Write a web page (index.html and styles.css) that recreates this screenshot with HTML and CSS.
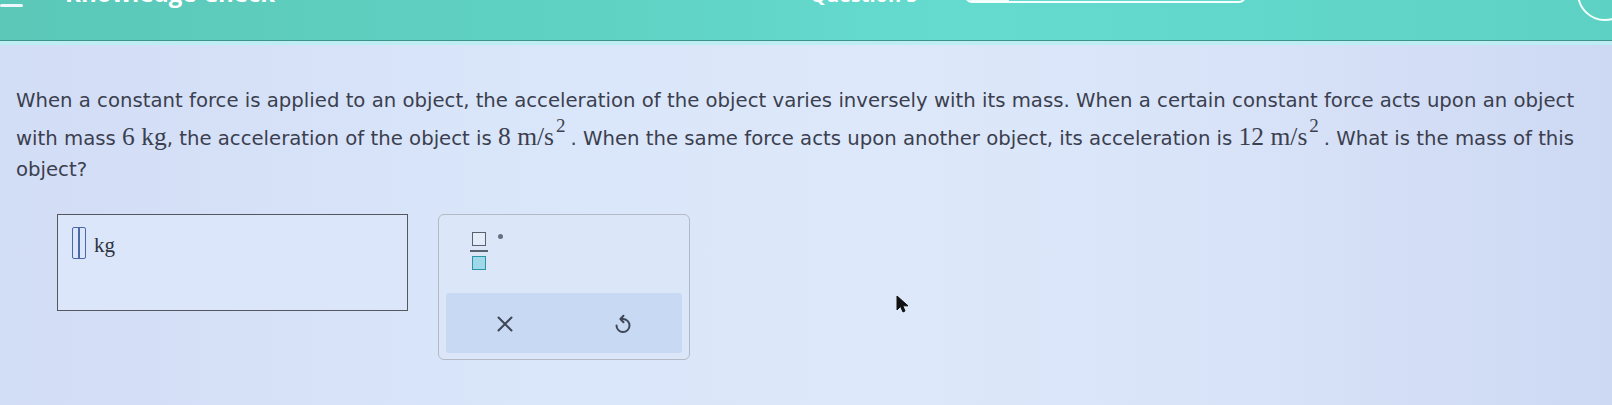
FILE: index.html
```html
<!DOCTYPE html>
<html lang="en">
<head>
<meta charset="utf-8">
<title>Knowledge Check</title>
<link rel="stylesheet" href="styles.css">
</head>
<body>
<header class="topbar">
  <div class="topbar-inner">
    <div class="brand">
      <span class="menu-icon"><span></span><span></span><span></span></span>
      <span class="title">Knowledge Check</span>
    </div>
    <span class="question-label">Question 5</span>
    <span class="progress"><span class="progress-fill"></span></span>
    <span class="avatar"></span>
  </div>
</header>
<main class="content">
  <p class="question">When a constant force is applied to an object, the acceleration of the object varies inversely with its mass. When a certain constant force acts upon an object with mass <span class="math">6 kg</span>, the acceleration of the object is <span class="math">8 m/s<sup>2</sup></span>. When the same force acts upon another object, its acceleration is <span class="math">12 m/s<sup>2</sup></span>. What is the mass of this object?</p>
  <div class="answer-row">
    <div class="answer-box">
      <span class="slot"><span class="slot-cursor"></span></span>
      <span class="unit">kg</span>
    </div>
    <div class="keypad">
      <div class="keypad-top">
        <button class="key key-fraction" type="button" aria-label="fraction">
          <span class="frac-num"></span>
          <span class="frac-bar"></span>
          <span class="frac-den"></span>
        </button>
        <span class="key-dot"></span>
      </div>
      <div class="keypad-actions">
        <button class="action" type="button" aria-label="clear">
          <svg width="18" height="18" viewBox="0 0 18 18"><path d="M2.5 2.5 L15.5 15.5 M15.5 2.5 L2.5 15.5" stroke="#3f4656" stroke-width="2" fill="none" stroke-linecap="round"/></svg>
        </button>
        <button class="action" type="button" aria-label="undo">
          <svg width="20" height="22" viewBox="0 0 20 22"><path d="M8 6 H10 A6.5 6.5 0 1 1 3.5 12.5" stroke="#3f4656" stroke-width="2" fill="none" stroke-linecap="round"/><path d="M10.5 2.8 L7.4 6 L10.5 9.2" stroke="#3f4656" stroke-width="2" fill="none" stroke-linecap="round" stroke-linejoin="round"/></svg>
        </button>
      </div>
    </div>
  </div>
</main>
<svg class="pointer" width="16" height="20" viewBox="0 0 16 20"><path d="M1 1 L1 15 L4.5 11.5 L7 17 L9 16 L6.8 10.8 L12 10.8 Z" fill="#111" stroke="#111" stroke-width="1" stroke-linejoin="round"/></svg>
</body>
</html>
```
FILE: styles.css
```css
* { box-sizing: border-box; }
html, body { margin: 0; padding: 0; }
body {
  width: 1612px;
  height: 405px;
  overflow: hidden;
  position: relative;
  font-family: "DejaVu Sans", Verdana, sans-serif;
  background: linear-gradient(90deg, #d2ddf6 0%, #d9e5f9 30%, #dde9fa 55%, #d7e2f8 80%, #cdd8f3 100%);
  color: #3b3f4f;
}

.topbar {
  height: 41px;
  background: linear-gradient(90deg, #5bc8b8 0%, #60d3c5 40%, #65dbd0 60%, #5dd2c4 100%);
  border-bottom: 1px solid #3e938a;
  box-shadow: 0 4px 0 #bdeef3;
  overflow: hidden;
  position: relative;
  z-index: 1;
}
.topbar-inner {
  display: flex;
  align-items: flex-end;
  height: 24px;
  margin-top: -19px;
  color: #fff;
  white-space: nowrap;
}
.brand {
  width: 810px;
  flex: none;
  display: flex;
  align-items: flex-end;
}
.menu-icon {
  display: flex;
  flex-direction: column;
  gap: 5px;
  width: 23px;
  margin-bottom: -2px;
  flex: none;
}
.menu-icon span { height: 3px; background: #eef6ff; border-radius: 2px; }
.title {
  margin-left: 42px;
  font-family: "Open Sans", sans-serif;
  font-weight: 700;
  font-size: 24px;
  line-height: 24px;
}
.question-label {
  width: 155px;
  flex: none;
  font-family: "Open Sans", sans-serif;
  font-weight: 700;
  font-size: 20px;
  line-height: 24px;
  margin-bottom: -2px;
}
.progress {
  width: 281px;
  flex: none;
  height: 14px;
  border: 2px solid #f4ffff;
  border-radius: 8px;
  margin-bottom: 2px;
  overflow: hidden;
  display: flex;
}
.progress-fill { width: 42px; background: #f4ffff; }
.avatar {
  margin-left: 331px;
  width: 56px;
  height: 56px;
  border: 2px solid #f4ffff;
  border-radius: 50%;
  margin-bottom: -16px;
  flex: none;
}

.content {
  padding: 44px 0 0 16px;
}
.question {
  margin: 0;
  width: 1580px;
  font-size: 19.7px;
  line-height: 31px;
}
.math {
  font-family: "Liberation Serif", "Times New Roman", serif;
  font-size: 25.5px;
}
.math sup {
  font-size: 19px;
  vertical-align: 13px;
  line-height: 1;
  margin-left: 2px;
  margin-right: 5px;
}

.answer-row {
  display: flex;
  align-items: flex-start;
  gap: 30px;
  margin-top: 29px;
  padding-left: 41px;
}
.answer-box {
  width: 351px;
  height: 97px;
  border: 1.5px solid #53585f;
  background: #dbe6fa;
  display: flex;
  align-items: flex-start;
  gap: 8px;
  padding: 12px 0 0 14px;
}
.slot {
  width: 14px;
  height: 32px;
  border: 1.5px solid #4d68a8;
  border-radius: 2px;
  display: flex;
  justify-content: center;
  flex: none;
}
.slot-cursor { width: 1.5px; background: #4d68a8; }
.unit {
  font-family: "Liberation Serif", "Times New Roman", serif;
  font-size: 21px;
  color: #2f3340;
  margin-top: 6px;
}

.keypad {
  width: 252px;
  height: 146px;
  border: 1px solid #b3bac6;
  border-radius: 6px;
  background: #dbe6f9;
  padding: 0 7px 6px 7px;
  display: flex;
  flex-direction: column;
  justify-content: space-between;
}
.keypad-top {
  display: flex;
  align-items: flex-start;
  padding: 17px 0 0 24px;
  gap: 10px;
}
.key {
  border: none;
  background: none;
  padding: 0;
  cursor: pointer;
}
.key-fraction {
  display: flex;
  flex-direction: column;
  align-items: center;
  gap: 4px;
  width: 18px;
}
.frac-num {
  width: 14px; height: 14px;
  border: 1.5px solid #5a616d;
  background: #e4ecfa;
}
.frac-bar { width: 18px; height: 1.5px; background: #5a616d; }
.frac-den {
  width: 14px; height: 14px;
  border: 1.5px solid #2a96a5;
  background: #9fd8e8;
}
.key-dot {
  width: 5px; height: 5px;
  border-radius: 50%;
  background: #68707e;
  margin-top: 2px;
}
.keypad-actions {
  height: 60px;
  background: #c8d9f4;
  border-radius: 3px;
  display: flex;
}
.action {
  flex: 1;
  border: none;
  background: none;
  display: flex;
  align-items: center;
  justify-content: center;
  padding: 0;
  margin-top: 2px;
}

.pointer {
  position: absolute;
  left: 896px;
  top: 295px;
}
```
